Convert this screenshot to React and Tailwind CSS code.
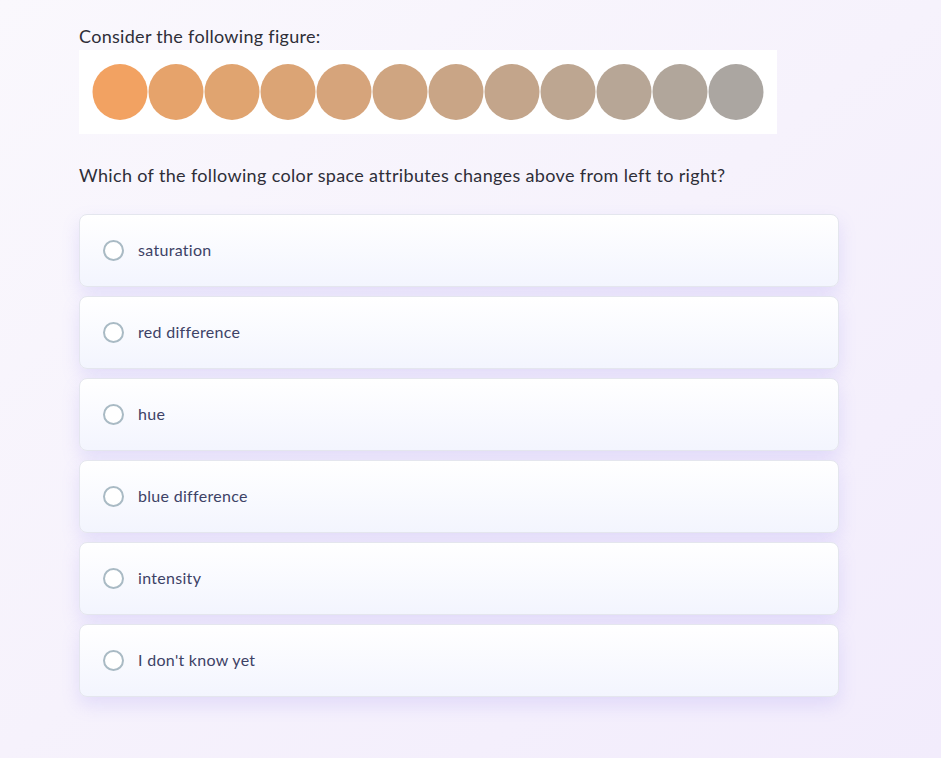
const options = ["saturation", "red difference", "hue", "blue difference", "intensity", "I don't know yet"];

const swatches = [
  "#f2a262", "#e6a36b", "#e0a470", "#dba475", "#d6a47b", "#cfa581",
  "#c9a586", "#c3a58b", "#bda691", "#b7a696", "#b1a69b", "#aba6a1",
];

function Figure() {
  return (
    <div className="w-[698px] h-[84px] bg-white mt-[2px]">
      <svg width="698" height="84" viewBox="0 0 698 84">
        {swatches.map((c, i) => (
          <ellipse key={i} cx={41 + i * 56} cy={42} rx={27.5} ry={28} fill={c} />
        ))}
      </svg>
    </div>
  );
}

function Option({ label }) {
  return (
    <label className="flex items-center h-[73px] pl-[23px] pb-[1px] rounded-lg border border-[#e4e6ee] bg-gradient-to-b from-white to-[#f3f5fe] shadow-[0_8px_18px_rgba(140,120,240,0.18)] cursor-pointer">
      <span className="w-[21px] h-[21px] rounded-full border-2 border-[#a9bac4] bg-white shrink-0" />
      <span className="ml-[14px] text-[16px] tracking-[0.3px] text-[#3d4266]">{label}</span>
    </label>
  );
}

export default function App() {
  return (
    <div
      className="min-h-[758px] bg-gradient-to-br from-[#faf8fd] via-[#f6f2fc] to-[#f2ecfc] px-[79px] pt-[24px] pb-10"
      style={{ fontFamily: "Lato, 'Open Sans', sans-serif" }}
    >
      <p className="text-[18px] leading-6 tracking-[0.3px] text-[#2e2e38]">Consider the following figure:</p>
      <Figure />
      <p className="mt-[29px] text-[18px] leading-6 tracking-[0.35px] text-[#2e2e38]">
        Which of the following color space attributes changes above from left to right?
      </p>
      <div className="mt-[27px] w-[760px] flex flex-col gap-[9px]">
        {options.map((o) => (
          <Option key={o} label={o} />
        ))}
      </div>
    </div>
  );
}
